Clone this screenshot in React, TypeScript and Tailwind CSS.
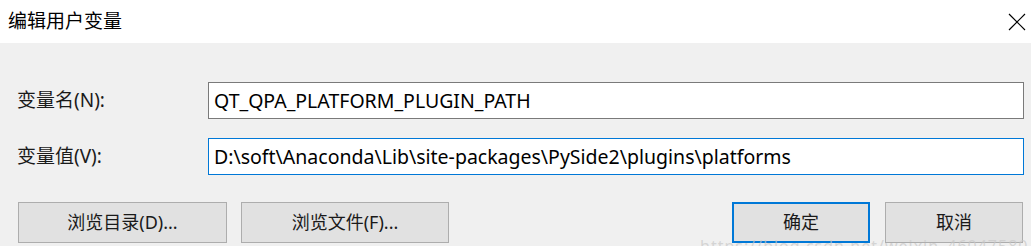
const font = "font-['Noto_Sans','Noto_Sans_CJK_SC',sans-serif]";

function Field({ label, value, focused }: { label: string; value: string; focused?: boolean }) {
  return (
    <div className="flex h-[37px] items-center">
      <label className="w-[208px] shrink-0 pl-[17px] text-[19px] text-[#1a1a1a]">{label}</label>
      <div
        className={`flex h-[37px] w-[816px] shrink-0 items-center border bg-white pl-[5px] text-[19.5px] text-black ${
          focused ? "border-[#0078d7]" : "border-[#7a7a7a]"
        }`}
      >
        {value}
      </div>
    </div>
  );
}

function Button({ children, primary, width }: { children: string; primary?: boolean; width: string }) {
  return (
    <button
      className={`flex h-[41px] items-center justify-center bg-[#e1e1e1] text-[18px] text-[#1a1a1a] ${width} ${
        primary ? "border-2 border-[#0078d7]" : "border border-[#adadad]"
      }`}
    >
      {children}
    </button>
  );
}

export default function App() {
  return (
    <div className={`relative h-[246px] w-[1031px] overflow-hidden bg-[#f0f0f0] ${font}`}>
      <div className="flex h-[43px] items-center justify-between bg-white pl-[8px] pr-[5px]">
        <span className="text-[19px] text-black">编辑用户变量</span>
        <svg width="18" height="18" viewBox="0 0 18 18">
          <path d="M1 1 L17 17 M17 1 L1 17" stroke="#000" strokeWidth="1.2" />
        </svg>
      </div>

      <div className="flex flex-col gap-[19px] pt-[39px]">
        <Field label="变量名(N):" value="QT_QPA_PLATFORM_PLUGIN_PATH" />
        <Field label="变量值(V):" value="D:\soft\Anaconda\Lib\site-packages\PySide2\plugins\platforms" focused />
      </div>

      <div className="flex pl-[18px] pr-[8px] pt-[27px]">
        <Button width="w-[209px]">浏览目录(D)...</Button>
        <Button width="ml-[14px] w-[208px]">浏览文件(F)...</Button>
        <div className="flex-1" />
        <Button primary width="w-[138px]">确定</Button>
        <Button width="ml-[15px] w-[138px]">取消</Button>
      </div>

      <div className="pointer-events-none absolute left-[700px] top-[234px] text-[16px] tracking-[1px] text-[#c8c8c8]/70">
        https://blog.csdn.net/weixin_46047580
      </div>
    </div>
  );
}
